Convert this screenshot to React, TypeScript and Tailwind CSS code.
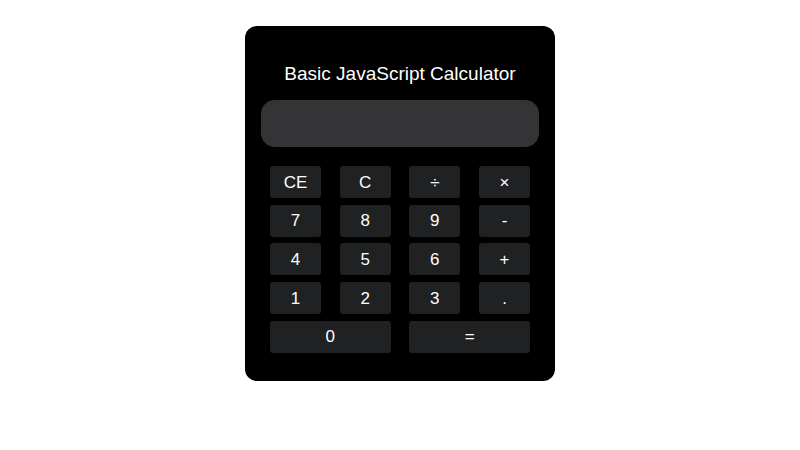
const keys: { label: string; wide?: boolean }[] = [
  { label: 'CE' }, { label: 'C' }, { label: '÷' }, { label: '×' },
  { label: '7' }, { label: '8' }, { label: '9' }, { label: '-' },
  { label: '4' }, { label: '5' }, { label: '6' }, { label: '+' },
  { label: '1' }, { label: '2' }, { label: '3' }, { label: '.' },
  { label: '0', wide: true }, { label: '=', wide: true },
];

export default function App() {
  return (
    <div className="w-[800px] h-[450px] bg-white flex justify-center pt-[26px] font-['Liberation_Sans',Arial,sans-serif]">
      <div className="w-[310px] h-[355px] bg-black rounded-[12px] flex flex-col">
        <h1 className="mt-[37px] text-center text-white text-[19px] leading-[22px]">Basic JavaScript Calculator</h1>
        <div className="mx-[16px] mt-[15px] h-[47px] rounded-[14px] bg-[#343436]" />
        <div className="mx-[25px] mt-[19px] grid grid-cols-4 gap-x-[18.7px] gap-y-[6.7px]">
          {keys.map((k) => (
            <button
              key={k.label}
              className={`h-[32px] rounded-[3px] bg-[#202123] text-white text-[17px] leading-none ${k.wide ? 'col-span-2' : ''}`}
            >
              {k.label}
            </button>
          ))}
        </div>
      </div>
    </div>
  );
}
